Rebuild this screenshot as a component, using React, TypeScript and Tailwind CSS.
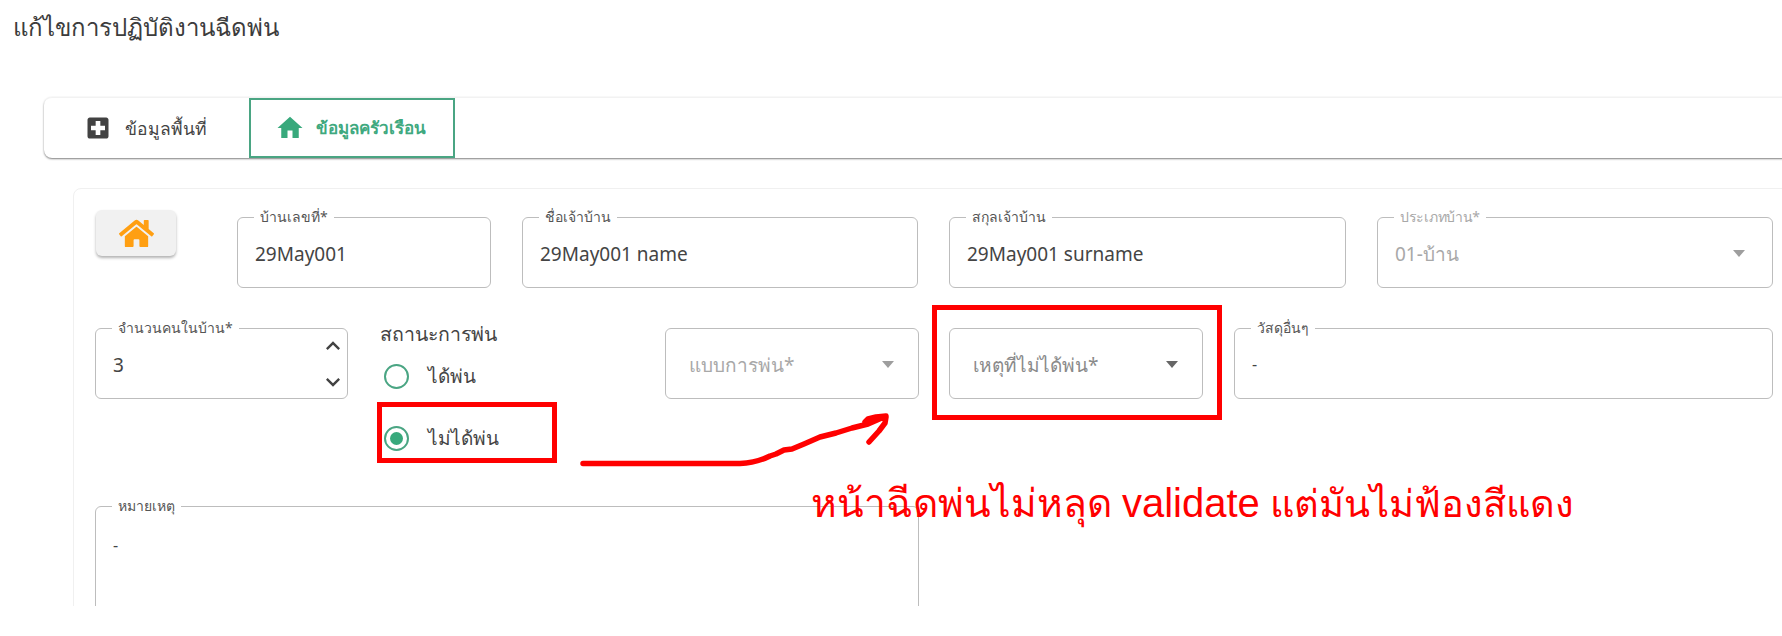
import * as React from 'react';
import { FaHome } from 'react-icons/fa';
import { MdExpandLess, MdExpandMore, MdHome, MdLocalHospital } from 'react-icons/md';

interface FieldProps {
	label?: string;
	className?: string;
	disabled?: boolean;
	children?: React.ReactNode;
}

const Field = ({ label, className, disabled, children }: FieldProps) => (
	<div className={`relative flex h-[71px] shrink-0 items-center rounded-[6px] border border-[#bdbdbd] pl-[17px] ${className ?? ''}`}>
		{label && (
			<span className={`absolute -top-[11px] left-[16px] bg-white px-[6px] leading-[20px] ${disabled ? 'text-[14px] tracking-[-0.3px] text-[#a8a8a8]' : 'text-[14px] text-[#555555]'}`}>
				{label}
			</span>
		)}
		{children}
	</div>
);

const Caret = ({ className }: { className: string }) => (
	<svg width="12" height="7" viewBox="0 0 12 7" className={`mt-[2px] ${className}`}>
		<path d="M0 0h12L6 7z" fill="currentColor" />
	</svg>
);

const Radio = ({ label, checked }: { label: string; checked?: boolean }) => (
	<div className="flex h-[26px] items-center gap-[19px] pl-[4px]">
		<span className="flex h-[25px] w-[25px] items-center justify-center rounded-full border-2 border-[#4aa583]">
			{checked && <span className="h-[13px] w-[13px] rounded-full bg-[#38a97c]" />}
		</span>
		<span className="text-[19px] text-[#444444]">{label}</span>
	</div>
);

export default function App() {
	return (
		<div className="relative h-[636px] w-[1782px] overflow-hidden bg-white font-['Noto_Sans',sans-serif] text-[#444444]">
			<div className="h-[606px] overflow-hidden">
				<h1 className="pl-[13px] pt-[8px] text-[24px] leading-[38px] font-normal text-[#3c3c3c]">แก้ไขการปฏิบัติงานฉีดพ่น</h1>

				{/* Tabs */}
				<div className="mt-[51px] ml-[44px] -mr-[20px] flex h-[61px] rounded-[8px] border-t border-[#f2f2f2] shadow-[0_1px_2px_rgba(0,0,0,0.5)]">
					<div className="flex w-[205px] items-center gap-[16px] pl-[43px] text-[17.5px] text-[#444444]">
						<MdLocalHospital size={28} className="-mx-[3px] shrink-0 text-[#424242]" />
						ข้อมูลพื้นที่
					</div>
					<div className="flex w-[206px] items-center gap-[13px] border-2 border-[#4aa583] pl-[26px] text-[17px] font-semibold text-[#3fa97f]">
						<MdHome size={30} className="-mx-[2px] shrink-0 text-[#38a97c]" />
						ข้อมูลครัวเรือน
					</div>
				</div>

				{/* Main card */}
				<div className="mt-[30px] ml-[73px] -mr-[20px] rounded-[8px] border border-[#f0f0f0] pl-[21px] pt-[21px] pb-[40px]">
					<div className="flex items-start">
						<div className="mr-[61px] ml-[1px] flex h-[46px] w-[80px] shrink-0 items-center justify-center rounded-[6px] bg-[#f1f1f1] shadow-[0_2px_3px_rgba(0,0,0,0.3)]">
							<FaHome size={35} className="text-[#ff9f12]" />
						</div>
						<div className="mt-[7px] flex gap-[31px]">
							<Field label="บ้านเลขที่*" className="w-[254px]">
								<span className="pt-[3px] text-[19px]">29May001</span>
							</Field>
							<Field label="ชื่อเจ้าบ้าน" className="w-[396px]">
								<span className="pt-[3px] text-[19px]">29May001 name</span>
							</Field>
							<Field label="สกุลเจ้าบ้าน" className="w-[397px]">
								<span className="pt-[3px] text-[19px]">29May001 surname</span>
							</Field>
							<Field label="ประเภทบ้าน*" disabled className="w-[396px] justify-between pr-[27px]">
								<span className="pt-[3px] text-[19px] text-[#a8a8a8]">01-บ้าน</span>
								<Caret className="text-[#9e9e9e]" />
							</Field>
						</div>
					</div>

					<div className="mt-[40px] flex items-start">
						<Field label="จำนวนคนในบ้าน*" className="w-[253px] justify-between pr-0">
							<span className="pt-[3px] text-[19px]">3</span>
							<div className="flex flex-col gap-[8px]">
								<MdExpandLess size={28} className="text-[#424242]" />
								<MdExpandMore size={28} className="text-[#424242]" />
							</div>
						</Field>
						<div className="ml-[32px] w-[253px] shrink-0">
							<div className="-mt-[6px] text-[19.5px] leading-[24px] text-[#444444]">สถานะการพ่น</div>
							<div className="mt-[17px] flex flex-col gap-[36px]">
								<Radio label="ได้พ่น" />
								<Radio label="ไม่ได้พ่น" checked />
							</div>
						</div>
						<Field className="ml-[32px] w-[254px] justify-between pr-[24px]">
							<span className="pl-[6px] pt-[3px] text-[19px] text-[#a8a8a8]">แบบการพ่น*</span>
							<Caret className="text-[#9e9e9e]" />
						</Field>
						<Field className="ml-[30px] w-[254px] justify-between pr-[24px]">
							<span className="pl-[6px] pt-[3px] text-[19px] text-[#8a8a8a]">เหตุที่ไม่ได้พ่น*</span>
							<Caret className="text-[#666666]" />
						</Field>
						<Field label="วัสดุอื่นๆ" className="ml-[31px] w-[539px]">
							<span className="text-[16px]">-</span>
						</Field>
					</div>

					<div className="relative mt-[55px] h-[200px] w-[824px] rounded-[6px] border border-[#bdbdbd] pl-[17px] pt-[26px]">
						<span className="absolute -top-[11px] left-[16px] bg-white px-[6px] text-[14px] leading-[20px] text-[#555555]">หมายเหตุ</span>
						<span className="text-[16px]">-</span>
					</div>
				</div>
			</div>

			{/* Red annotations drawn on top of the screenshot */}
			<div className="absolute left-[377px] top-[402px] h-[61px] w-[180px] border-[5px] border-[#ff0000]" />
			<div className="absolute left-[932px] top-[305px] h-[115px] w-[290px] border-[5px] border-[#ff0000]" />
			<svg className="absolute left-0 top-0" width="1782" height="636" fill="none">
				<path
					d="M583 463.5H740C752 463 762 460 770 456L776 454L784 450L792 449L804 444L820 437L836 433L852 428L868 424L884 417L886 417L885 423L879 431L869 442M865 422L868 419L876 417L886 416"
					stroke="#ff0000"
					strokeWidth="5.5"
					strokeLinecap="round"
					strokeLinejoin="round"
				/>
			</svg>
			<div className="absolute left-[811px] top-[478px] text-[38px] leading-[48px] whitespace-nowrap text-[#ff0000]">
				<span className="text-[39px]">หน้าฉีดพ่นไม่หลุด</span> <span className="font-['Liberation_Sans',sans-serif] text-[40px]">validate</span> แต่มันไม่ฟ้องสีแดง
			</div>
		</div>
	);
}
